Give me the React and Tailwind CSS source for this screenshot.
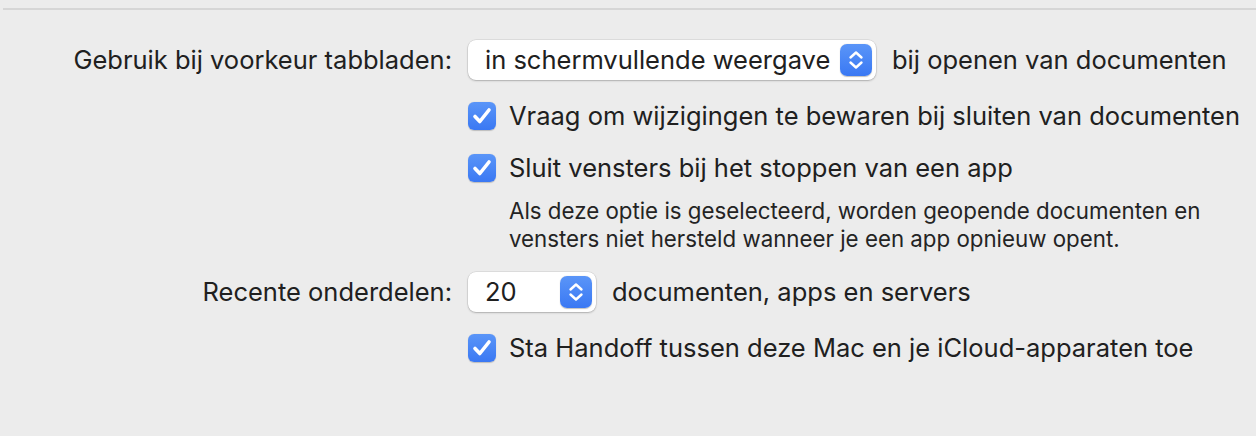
import React from 'react';

const FONT = { fontFamily: 'Inter, "Noto Sans", sans-serif' };

function Stepper() {
  return (
    <div className="w-8 h-8 rounded-[7px] bg-gradient-to-b from-[#5a95f8] to-[#3a78f3] flex items-center justify-center shadow-[0_0.5px_1px_rgba(0,0,0,0.25)]">
      <svg width="32" height="32" viewBox="0 0 32 32" fill="none" stroke="white" strokeWidth="2.4" strokeLinecap="round" strokeLinejoin="round">
        <path d="M10.5 13.5 L16 8.5 L21.5 13.5" />
        <path d="M10.5 18.5 L16 23.5 L21.5 18.5" />
      </svg>
    </div>
  );
}

function Select({ value, width }) {
  return (
    <div className={`${width} h-10 bg-white rounded-[8px] shadow-[0_0_0_0.5px_rgba(0,0,0,0.12),0_1px_2px_rgba(0,0,0,0.22)] flex items-center justify-between pl-[17px] pr-1`}>
      <span>{value}</span>
      <Stepper />
    </div>
  );
}

function Check({ label }) {
  return (
    <div className="flex items-center gap-[13px] h-7">
      <div className="w-7 h-7 shrink-0 rounded-[6px] bg-gradient-to-b from-[#5a95f8] to-[#3a78f3] flex items-center justify-center shadow-[0_0.5px_1px_rgba(0,0,0,0.2)]">
        <svg width="28" height="28" viewBox="0 0 28 28" fill="none" stroke="white" strokeWidth="3.6" strokeLinecap="round" strokeLinejoin="round">
          <path d="M7 14.5 L11.8 19.5 L21 8" />
        </svg>
      </div>
      <span className="whitespace-nowrap">{label}</span>
    </div>
  );
}

export default function App() {
  return (
    <div className="w-[1256px] h-[436px] bg-[#ececec] text-[#202020] text-[25.5px] overflow-hidden" style={FONT}>
      <div className="pt-2 pl-[3px]">
        <div className="h-[2px] bg-[#d6d6d6]" />
      </div>
      <div className="grid grid-cols-[452px_1fr] gap-x-4 mt-[30px]">
        <div className="text-right h-10 leading-10 whitespace-nowrap">Gebruik bij voorkeur tabbladen:</div>
        <div className="flex items-center gap-4 whitespace-nowrap">
          <Select value="in schermvullende weergave" width="w-[408px]" />
          <span>bij openen van documenten</span>
        </div>

        <div />
        <div className="mt-[22px]">
          <Check label="Vraag om wijzigingen te bewaren bij sluiten van documenten" />
        </div>

        <div />
        <div className="mt-6">
          <Check label="Sluit vensters bij het stoppen van een app" />
        </div>

        <div />
        <div className="pl-[41px] text-[22.3px] leading-7 mt-[15px] text-[#242424] whitespace-nowrap">
          <div>Als deze optie is geselecteerd, worden geopende documenten en</div>
          <div>vensters niet hersteld wanneer je een app opnieuw opent.</div>
        </div>

        <div className="text-right h-10 leading-10 mt-[19px]">Recente onderdelen:</div>
        <div className="flex items-center gap-4 mt-[19px] whitespace-nowrap">
          <Select value="20" width="w-32" />
          <span>documenten, apps en servers</span>
        </div>

        <div />
        <div className="mt-[22px]">
          <Check label="Sta Handoff tussen deze Mac en je iCloud-apparaten toe" />
        </div>
      </div>
    </div>
  );
}
